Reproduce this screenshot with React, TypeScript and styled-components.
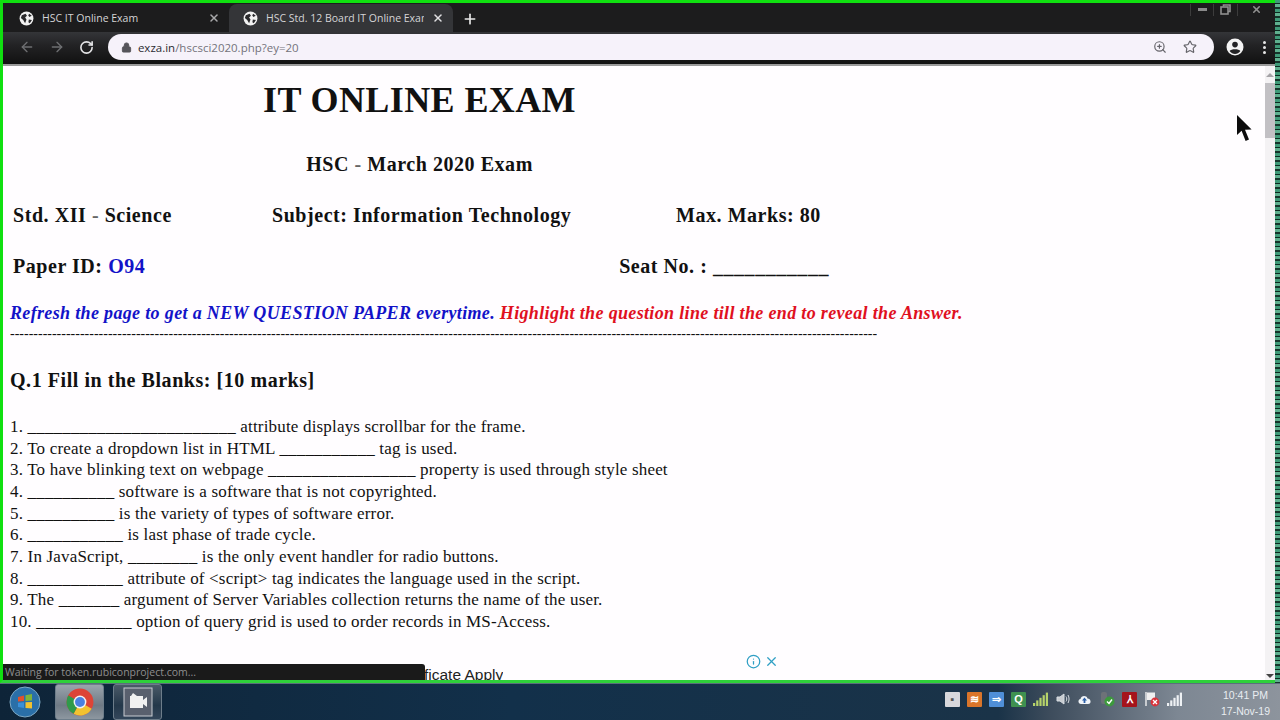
import React from "react";
import styled, { createGlobalStyle } from "styled-components";
import { ArrowLeft, ArrowRight, RotateCw, Lock, ZoomIn, Star, Plus, X, Info } from "lucide-react";

const Global = createGlobalStyle`
  html, body { margin: 0; padding: 0; overflow: hidden; background: #fff; }
  * { box-sizing: border-box; }
`;

const Screen = styled.div`
  width: 1280px;
  height: 720px;
  display: flex;
  flex-direction: column;
  position: relative;
  overflow: hidden;
  font-family: "Liberation Serif", serif;
`;

const WindowRow = styled.div`
  display: flex;
  height: 683px;
`;

const Browser = styled.div`
  width: 1275px;
  display: flex;
  flex-direction: column;
  border-top: 3px solid #10e010;
  border-left: 3px solid #10e010;
  border-bottom: 3px solid #2ed03a;
`;

const NoiseStrip = styled.div`
  width: 5px;
  background: repeating-linear-gradient(180deg, #3f9a78 0 3px, #0c2a20 3px 4px, #5fb08f 4px 7px, #16352b 7px 9px);
`;

const TabBar = styled.div`
  height: 29px;
  background: #1c1c1d;
  display: flex;
  align-items: flex-end;
  padding-left: 2px;
  position: relative;
  font-family: "Open Sans", "Liberation Sans", sans-serif;
`;

const Tab = styled.div<{ $active?: boolean }>`
  width: 224px;
  height: 28px;
  display: flex;
  align-items: center;
  padding: 0 9px 0 14px;
  gap: 8px;
  color: #d4d4d6;
  font-size: 10.5px;
  border-radius: 8px 8px 0 0;
  background: ${(p) => (p.$active ? "#343538" : "transparent")};
  white-space: nowrap;
`;

const TabTitle = styled.span`
  flex: 1;
  overflow: hidden;
`;

const NewTab = styled.div`
  width: 32px;
  height: 26px;
  margin-left: 1px;
  display: flex;
  align-items: center;
  justify-content: center;
  color: #e8e8e8;
`;

const WindowControls = styled.div`
  position: absolute;
  right: 0;
  top: 0;
  height: 13px;
  display: flex;
  align-items: center;
  color: #8f8f8f;
`;

const WindowButton = styled.div<{ $w: number }>`
  width: ${(p) => p.$w}px;
  height: 12px;
  display: flex;
  align-items: center;
  justify-content: center;
  border-left: 1px solid #3c3c3c;
`;

const MinBar = styled.div`
  width: 9px;
  height: 3px;
  background: #8a8a8a;
`;

const Toolbar = styled.div`
  height: 34px;
  background: linear-gradient(180deg, #343538 0%, #232325 40%, #111 100%);
  border-bottom: 2px solid #9a9a9a;
  display: flex;
  align-items: center;
  padding: 0 0 2px 9px;
`;

const NavButton = styled.div<{ $dim?: boolean }>`
  width: 30px;
  display: flex;
  justify-content: center;
  color: ${(p) => (p.$dim ? "#6e6f72" : "#e4e4e6")};
`;

const Omnibox = styled.div`
  margin-left: 6px;
  width: 1107px;
  height: 26px;
  background: #f6f2fa;
  border-radius: 13px;
  display: flex;
  align-items: center;
  padding: 0 9px 0 13px;
  font-family: "Open Sans", "Liberation Sans", sans-serif;
  font-size: 11.5px;
  color: #74737a;
`;

const UrlHost = styled.span`
  color: #2b2b30;
`;

const Url = styled.div`
  flex: 1;
  margin-left: 6px;
`;

const OmniIcon = styled.div`
  width: 30px;
  display: flex;
  justify-content: center;
  color: #66656b;
`;

const ProfileSlot = styled.div`
  width: 40px;
  display: flex;
  justify-content: center;
  margin-left: 1px;
`;

const KebabSlot = styled.div`
  width: 20px;
  display: flex;
  flex-direction: column;
  align-items: center;
  gap: 2px;
`;

const Dot = styled.div`
  width: 3px;
  height: 3px;
  border-radius: 50%;
  background: #e6e6e6;
`;

const Viewport = styled.div`
  flex: 1;
  display: flex;
  min-height: 0;
  background: #fffdff;
`;

const Page = styled.main`
  flex: 1;
  padding: 0 0 0 7px;
  overflow: hidden;
  color: #111;
`;

const Header = styled.div`
  width: 819px;
  text-align: center;
`;

const Title = styled.h1`
  margin: 13px 0 0;
  font-size: 36px;
  line-height: 42px;
  letter-spacing: 0.4px;
  font-weight: 700;
`;

const SubTitle = styled.h2`
  margin: 31px 0 0;
  font-size: 20px;
  line-height: 24px;
  letter-spacing: 0.55px;
  font-weight: 700;
`;

const InfoRow = styled.div<{ $top: number }>`
  display: grid;
  grid-template-columns: 259px 404px auto;
  width: 819px;
  padding-left: 3px;
  margin-top: ${(p) => p.$top}px;
  font-size: 20px;
  line-height: 24px;
  letter-spacing: 0.55px;
  font-weight: 700;
`;

const PaperRow = styled(InfoRow)`
  grid-template-columns: 1fr auto;
`;

const Dash = styled.span`
  color: #666;
`;

const Blue = styled.span`
  color: #1212c8;
`;

const Notice = styled.p`
  margin: 24px 0 0;
  font-size: 18px;
  line-height: 22px;
  font-weight: 700;
  font-style: italic;
  letter-spacing: 0.34px;
  color: #1212c8;
  white-space: nowrap;
`;

const Red = styled.span`
  color: #e0101e;
`;

const Rule = styled.div`
  font-size: 14px;
  line-height: 16px;
  white-space: nowrap;
  overflow: hidden;
  width: 867px;
  margin-top: 2px;
  font-weight: 400;
`;

const Question = styled.h3`
  margin: 26px 0 0;
  font-size: 20px;
  line-height: 24px;
  letter-spacing: 0.55px;
  font-weight: 700;
`;

const Blanks = styled.ol`
  list-style: none;
  margin: 24px 0 0;
  padding: 0;
  font-size: 17px;
  line-height: 21.67px;
  letter-spacing: 0.18px;
`;

const Scrollbar = styled.div`
  width: 10px;
  background: #f4f2f4;
  display: flex;
  flex-direction: column;
  align-items: center;
  justify-content: space-between;
  padding: 7px 0 2px;
`;

const ScrollTop = styled.div`
  display: flex;
  flex-direction: column;
  align-items: center;
  width: 100%;
`;

const Thumb = styled.div`
  width: 100%;
  height: 55px;
  margin-top: 6px;
  background: #c2c0c4;
`;

const ArrowUp = styled.div`
  width: 0;
  height: 0;
  border-left: 4px solid transparent;
  border-right: 4px solid transparent;
  border-bottom: 4px solid #a5a3a7;
`;

const ArrowDown = styled.div`
  width: 0;
  height: 0;
  border-left: 4px solid transparent;
  border-right: 4px solid transparent;
  border-top: 4px solid #444;
`;

const Cursor = styled.svg`
  position: absolute;
  left: 1236px;
  top: 114px;
`;

const StatusBubble = styled.div`
  position: absolute;
  left: 3px;
  top: 664px;
  width: 422px;
  height: 16px;
  background: #1a1a1a;
  border-radius: 0 3px 0 0;
  color: #8e8e8e;
  font-family: "Open Sans", "Liberation Sans", sans-serif;
  font-size: 10.5px;
  line-height: 17px;
  padding-left: 2px;
`;

const AdText = styled.div`
  position: absolute;
  left: 424px;
  top: 665px;
  height: 15px;
  overflow: hidden;
  font-family: "Liberation Sans", sans-serif;
  font-size: 15.5px;
  line-height: 19px;
  color: #222;
`;

const AdIcons = styled.div`
  position: absolute;
  left: 746px;
  top: 654px;
  display: flex;
  align-items: center;
  gap: 3px;
  color: #2f9fc4;
`;

const Taskbar = styled.footer`
  height: 37px;
  display: flex;
  align-items: center;
  background: linear-gradient(90deg, #0e2438 0%, #12304a 40%, #1a3348 78%, #3d4c5c 82%, #7d8793 92%, #8d949d 100%);
  border-top: 1px solid #5a6f7c;
  padding-left: 7px;
  position: relative;
`;

const StartOrb = styled.svg`
  flex: none;
`;

const TaskButton = styled.div<{ $active?: boolean; $w: number; $ml: number }>`
  width: ${(p) => p.$w}px;
  height: 36px;
  margin-left: ${(p) => p.$ml}px;
  border: 1px solid #6d7d8a;
  border-radius: 3px;
  display: flex;
  align-items: center;
  justify-content: center;
  background: ${(p) =>
    p.$active
      ? "linear-gradient(180deg, #9aa4ad 0%, #6f7a85 60%, #8d97a0 100%)"
      : "linear-gradient(180deg, #4a5a68 0%, #24384a 60%, #33465a 100%)"};
`;

const Tray = styled.div`
  position: absolute;
  left: 945px;
  top: 7px;
  display: flex;
  align-items: center;
  gap: 7px;
`;

const Clock = styled.div`
  position: absolute;
  right: 10px;
  top: 3px;
  text-align: center;
  color: #e9edf1;
  font-family: "Liberation Sans", sans-serif;
  font-size: 10.5px;
  line-height: 16px;
`;

const TrayBox = styled.div<{ $bg: string; $fg?: string }>`
  width: 15px;
  height: 15px;
  border-radius: 1px;
  background: ${(p) => p.$bg};
  color: ${(p) => p.$fg ?? "#fff"};
  font: 700 11px/15px "Liberation Sans", sans-serif;
  text-align: center;
`;

const Globe = () => (
  <svg width="15" height="15" viewBox="0 0 16 16">
    <circle cx="8" cy="8" r="7.4" fill="#f2f2f2" />
    <path d="M3 4.5 L7 3 L8.5 5 L6.5 7 L8 9 L6.5 13 L4.5 9.5 L2 7.5Z M11 2.8 L13.6 5 L11 6.5 L9.8 4.5Z M10.5 9 L13.8 9.5 L11.5 13 L10 12Z" fill="#2a2a2c" />
  </svg>
);

const Avatar = () => (
  <svg width="18" height="18" viewBox="0 0 18 18">
    <circle cx="9" cy="9" r="8.5" fill="#f4f4f4" />
    <circle cx="9" cy="6.6" r="2.8" fill="#232325" />
    <path d="M3.6 13 C5 10.6 13 10.6 14.4 13 C13 15 11 16 9 16 C7 16 5 15 3.6 13Z" fill="#232325" />
  </svg>
);

const Bars = ({ color }: { color: string }) => (
  <svg width="16" height="14" viewBox="0 0 16 14">
    {[0, 1, 2, 3, 4].map((i) => (
      <rect key={i} x={i * 3.2} y={11 - i * 2.6} width="2.2" height={3 + i * 2.6} fill={color} />
    ))}
  </svg>
);

const ChromeLogo = () => (
  <svg width="28" height="28" viewBox="0 0 48 48">
    <circle cx="24" cy="24" r="23" fill="#dc4437" />
    <path d="M24 24 L44 35.5 A23 23 0 0 1 13 44.2Z" fill="#f2c230" />
    <path d="M24 24 L13 44.2 A23 23 0 0 1 4 12.5Z" fill="#2f9a4a" />
    <path d="M24 24 L4 12.5 A23 23 0 0 1 16 2.5 L24 12Z" fill="#dc4437" />
    <circle cx="24" cy="24" r="11" fill="#f2f2f2" />
    <circle cx="24" cy="24" r="8.5" fill="#4a80e0" />
  </svg>
);

const blanks = [
  "1. ________________________ attribute displays scrollbar for the frame.",
  "2. To create a dropdown list in HTML ___________ tag is used.",
  "3. To have blinking text on webpage _________________ property is used through style sheet",
  "4. __________ software is a software that is not copyrighted.",
  "5. __________ is the variety of types of software error.",
  "6. ___________ is last phase of trade cycle.",
  "7. In JavaScript, ________ is the only event handler for radio buttons.",
  "8. ___________ attribute of <script> tag indicates the language used in the script.",
  "9. The _______ argument of Server Variables collection returns the name of the user.",
  "10. ___________ option of query grid is used to order records in MS-Access.",
];

export default function App() {
  return (
    <Screen>
      <Global />
      <WindowRow>
        <Browser>
          <TabBar>
            <Tab>
              <Globe />
              <TabTitle>HSC IT Online Exam</TabTitle>
              <X size={12} strokeWidth={3} color="#a9a9ab" />
            </Tab>
            <Tab $active>
              <Globe />
              <TabTitle>HSC Std. 12 Board IT Online Exam</TabTitle>
              <X size={12} strokeWidth={3} color="#e0e0e2" />
            </Tab>
            <NewTab>
              <Plus size={16} strokeWidth={2.5} />
            </NewTab>
            <WindowControls>
              <WindowButton $w={23}><MinBar /></WindowButton>
              <WindowButton $w={24}>
                <svg width="11" height="11" viewBox="0 0 11 11" fill="none" stroke="#8f8f8f" strokeWidth="1.6">
                  <path d="M3.5 2.5V1H10V7.5H8" />
                  <rect x="1" y="3" width="7" height="7" />
                </svg>
              </WindowButton>
              <WindowButton $w={38}><X size={11} strokeWidth={3.5} /></WindowButton>
            </WindowControls>
          </TabBar>
          <Toolbar>
            <NavButton $dim><ArrowLeft size={16} /></NavButton>
            <NavButton $dim><ArrowRight size={16} /></NavButton>
            <NavButton><RotateCw size={15} strokeWidth={2.6} /></NavButton>
            <Omnibox>
              <Lock size={11} fill="#55545a" color="#55545a" />
              <Url><UrlHost>exza.in</UrlHost>/hscsci2020.php?ey=20</Url>
              <OmniIcon><ZoomIn size={14} /></OmniIcon>
              <OmniIcon><Star size={14} /></OmniIcon>
            </Omnibox>
            <ProfileSlot><Avatar /></ProfileSlot>
            <KebabSlot><Dot /><Dot /><Dot /></KebabSlot>
          </Toolbar>
          <Viewport>
            <Page>
              <Header>
                <Title>IT ONLINE EXAM</Title>
                <SubTitle>HSC <Dash>-</Dash> March 2020 Exam</SubTitle>
              </Header>
              <InfoRow $top={27}>
                <span>Std. XII <Dash>-</Dash> Science</span>
                <span>Subject: Information Technology</span>
                <span>Max. Marks: 80</span>
              </InfoRow>
              <PaperRow $top={27}>
                <span>Paper ID: <Blue>O94</Blue></span>
                <span>Seat No. : ___________</span>
              </PaperRow>
              <Notice>
                Refresh the page to get a NEW QUESTION PAPER everytime. <Red>Highlight the question line till the end to reveal the Answer.</Red>
              </Notice>
              <Rule>{"-".repeat(190)}</Rule>
              <Question>Q.1 Fill in the Blanks: [10 marks]</Question>
              <Blanks>
                {blanks.map((line) => (
                  <li key={line}>{line}</li>
                ))}
              </Blanks>
            </Page>
            <Scrollbar>
              <ScrollTop>
                <ArrowUp />
                <Thumb />
              </ScrollTop>
              <ArrowDown />
            </Scrollbar>
          </Viewport>
        </Browser>
        <NoiseStrip />
      </WindowRow>
      <Taskbar>
        <StartOrb width="36" height="36" viewBox="0 0 36 36">
          <circle cx="18" cy="18" r="15" fill="#2a6fa8" stroke="#7fa9c4" strokeWidth="1" />
          <path d="M11 13 L17 11.5 V17 L11 17.5Z" fill="#e2512c" />
          <path d="M18.5 11.2 L25 10 V16.5 L18.5 17Z" fill="#7fb53a" />
          <path d="M11 18.7 L17 18.3 V24 L11 23Z" fill="#3a8fd8" />
          <path d="M18.5 18.2 L25 18 V24.5 L18.5 24Z" fill="#f2c230" />
        </StartOrb>
        <TaskButton $active $w={49} $ml={12}><ChromeLogo /></TaskButton>
        <TaskButton $w={49} $ml={9}>
          <svg width="30" height="30" viewBox="0 0 30 30">
            <rect x="1" y="1" width="28" height="28" fill="#59606e" stroke="#c9ccd2" />
            <path d="M7 9 H20 V13 L24 10 V20 L20 17 V21 H7Z M10 6 L14 9 H8Z" fill="#f1f1f1" />
          </svg>
        </TaskButton>
        <Tray>
          <TrayBox $bg="#d8d8dc" $fg="#555">▪</TrayBox>
          <TrayBox $bg="#d9752a">≋</TrayBox>
          <TrayBox $bg="#4f8fd8">⇒</TrayBox>
          <TrayBox $bg="#3f9150">Q</TrayBox>
          <Bars color="#b6d36a" />
          <svg width="14" height="14" viewBox="0 0 14 14" fill="none" stroke="#d8dde2">
            <path d="M1 5H4L8 2V12L4 9H1Z" fill="#c8ccd0" />
            <path d="M10 4.5C11 6 11 8 10 9.5M12 3C13.4 5.5 13.4 8.5 12 11" />
          </svg>
          <svg width="15" height="13" viewBox="0 0 15 13">
            <path d="M4 11C1 11 0.5 6.5 3.5 6C4 2.5 9.5 2 10.5 5.5C14 5.5 15 11 11 11Z" fill="#f0f4f8" />
            <path d="M7.5 4.5L10 7.5H8.4V10H6.6V7.5H5Z" fill="#2a5fa8" />
          </svg>
          <svg width="16" height="16" viewBox="0 0 16 16">
            <rect x="2" y="1" width="6" height="12" rx="2" fill="#6d7278" />
            <circle cx="10.5" cy="10.5" r="5" fill="#3c9a3c" />
            <path d="M8 10.5L10 12.5L13 8.5" fill="none" stroke="#fff" strokeWidth="1.4" />
          </svg>
          <TrayBox $bg="#a5141c">⅄</TrayBox>
          <svg width="16" height="16" viewBox="0 0 16 16">
            <path d="M2 1V15" stroke="#f0f0f0" strokeWidth="1.4" />
            <path d="M3 1.5H11V9H3Z" fill="#f0f0f0" />
            <circle cx="11" cy="11" r="4.4" fill="#d8333a" />
            <path d="M9 9L13 13M13 9L9 13" stroke="#fff" strokeWidth="1.3" />
          </svg>
          <Bars color="#eef1f4" />
        </Tray>
        <Clock>10:41 PM<br />17-Nov-19</Clock>
      </Taskbar>
      <Cursor width="17" height="30" viewBox="0 0 17 30">
        <path d="M1 1 L1 21 L5.6 16.8 L9.6 27 L13 25.6 L9 15.8 L15.6 15.4 Z" fill="#0c0c0c" />
      </Cursor>
      <AdText>ficate Apply</AdText>
      <AdIcons>
        <Info size={15} />
        <X size={15} />
      </AdIcons>
      <StatusBubble>Waiting for token.rubiconproject.com...</StatusBubble>
    </Screen>
  );
}
